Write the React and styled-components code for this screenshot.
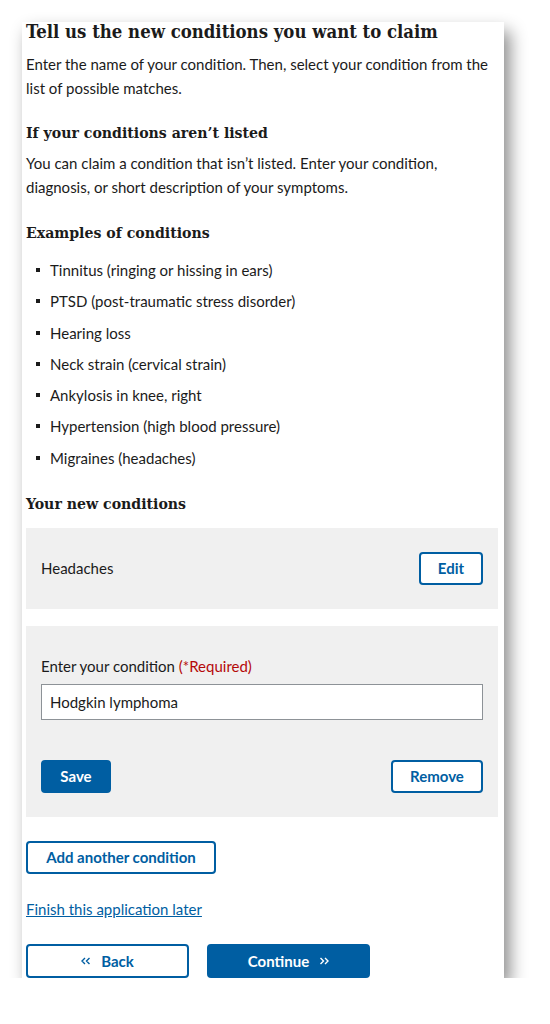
import React from 'react'
import styled, { createGlobalStyle } from 'styled-components'

const GlobalStyle = createGlobalStyle`
  body {
    margin: 0;
    background: #ffffff;
    font-family: 'Lato', 'Liberation Sans', sans-serif;
    color: #1b1b1b;
  }
`

// Styles
const Card = styled.div`
  margin: 22px 0 0 22px;
  width: 482px;
  height: 956px;
  box-sizing: border-box;
  padding: 0 6px 0 4px;
  overflow: hidden;
  background: #ffffff;
  box-shadow: 6px 9px 16px rgba(0, 0, 0, 0.45);
`

const Title = styled.h1`
  margin: 0 0 10px;
  font-family: 'DejaVu Serif Condensed', 'DejaVu Serif', serif;
  font-stretch: condensed;
  font-size: 18.4px;
  line-height: 20px;
  font-weight: 700;
`

const SubTitle = styled.h2`
  margin: ${props => props.top}px 0 ${props => props.bottom}px;
  font-family: 'DejaVu Serif Condensed', 'DejaVu Serif', serif;
  font-stretch: condensed;
  font-size: 15.7px;
  line-height: 22px;
  font-weight: 700;
`

const Text = styled.p`
  margin: 0;
  font-size: 15px;
  line-height: 24px;
`

const List = styled.ul`
  margin: 0;
  padding: 0;
  list-style: none;
`

const Item = styled.li`
  display: flex;
  align-items: center;
  gap: 10px;
  padding-left: 10px;
  font-size: 15px;
  line-height: 24px;
  margin-bottom: 7.3px;

  &::before {
    content: '';
    width: 4px;
    height: 4px;
    background: #1b1b1b;
  }
`

const Panel = styled.div`
  background: #f0f0f0;
  padding: ${props => props.pad};
  margin-bottom: ${props => props.gap}px;
`

const Row = styled.div`
  display: flex;
  align-items: center;
  justify-content: space-between;
  font-size: 15px;
`

const Label = styled.label`
  display: block;
  font-size: 15px;
  line-height: 24px;
  margin-bottom: 6px;
`

const Required = styled.span`
  color: #b50909;
`

const Input = styled.input`
  display: block;
  width: 100%;
  height: 36px;
  box-sizing: border-box;
  margin: 0 0 40px;
  padding: 0 8px;
  border: 1px solid #8d9297;
  background: #ffffff;
  font-family: 'Lato', 'Liberation Sans', sans-serif;
  font-size: 15px;
  color: #1b1b1b;
  outline: none;
`

const Button = styled.button`
  display: inline-flex;
  align-items: center;
  justify-content: center;
  gap: 10px;
  box-sizing: border-box;
  width: ${props => props.width}px;
  height: ${props => props.height || 33}px;
  padding: 0;
  border: 2px solid #005ea2;
  border-radius: 4px;
  background: ${props => (props.primary ? '#005ea2' : '#ffffff')};
  color: ${props => (props.primary ? '#ffffff' : '#005ea2')};
  font-family: 'Lato', 'Liberation Sans', sans-serif;
  font-size: 15px;
  font-weight: 700;
  cursor: pointer;
`

const LinkText = styled.a`
  display: block;
  margin: 23px 0 23px;
  font-size: 15px;
  line-height: 24px;
  color: #005ea2;
  text-decoration: underline;
`

const NavRow = styled.div`
  display: flex;
  gap: 18px;
`

const Chevrons = ({ flip }) => (
  <svg
    width='10'
    height='8'
    viewBox='0 0 10 8'
    fill='none'
    stroke='currentColor'
    strokeWidth='1.4'
    style={flip ? { transform: 'scaleX(-1)' } : undefined}
  >
    <path d='M4 1 L1 4 L4 7 M8.5 1 L5.5 4 L8.5 7' />
  </svg>
)

const examples = [
  'Tinnitus (ringing or hissing in ears)',
  'PTSD (post-traumatic stress disorder)',
  'Hearing loss',
  'Neck strain (cervical strain)',
  'Ankylosis in knee, right',
  'Hypertension (high blood pressure)',
  'Migraines (headaches)'
]

export default function App () {
  return (
    <>
      <GlobalStyle />
      <Card>
        <Title>Tell us the new conditions you want to claim</Title>
        <Text>
          Enter the name of your condition. Then, select your condition from the
          list of possible matches.
        </Text>

        <SubTitle top={22} bottom={7}>If your conditions aren’t listed</SubTitle>
        <Text>
          You can claim a condition that isn’t listed. Enter your condition,
          diagnosis, or short description of your symptoms.
        </Text>

        <SubTitle top={23} bottom={14}>Examples of conditions</SubTitle>
        <List>
          {examples.map(item => (
            <Item key={item}>{item}</Item>
          ))}
        </List>

        <SubTitle top={23} bottom={13}>Your new conditions</SubTitle>
        <Panel pad='24px 15px' gap={17}>
          <Row>
            <span>Headaches</span>
            <Button width={64}>Edit</Button>
          </Row>
        </Panel>

        <Panel pad='28px 15px 24px' gap={24}>
          <Label>
            Enter your condition <Required>(*Required)</Required>
          </Label>
          <Input defaultValue='Hodgkin lymphoma' />
          <Row>
            <Button width={70} primary>Save</Button>
            <Button width={92}>Remove</Button>
          </Row>
        </Panel>

        <Button width={190}>Add another condition</Button>
        <LinkText href='#'>Finish this application later</LinkText>

        <NavRow>
          <Button width={163} height={34}>
            <Chevrons />
            Back
          </Button>
          <Button width={163} height={34} primary>
            Continue
            <Chevrons flip />
          </Button>
        </NavRow>
      </Card>
    </>
  )
}
